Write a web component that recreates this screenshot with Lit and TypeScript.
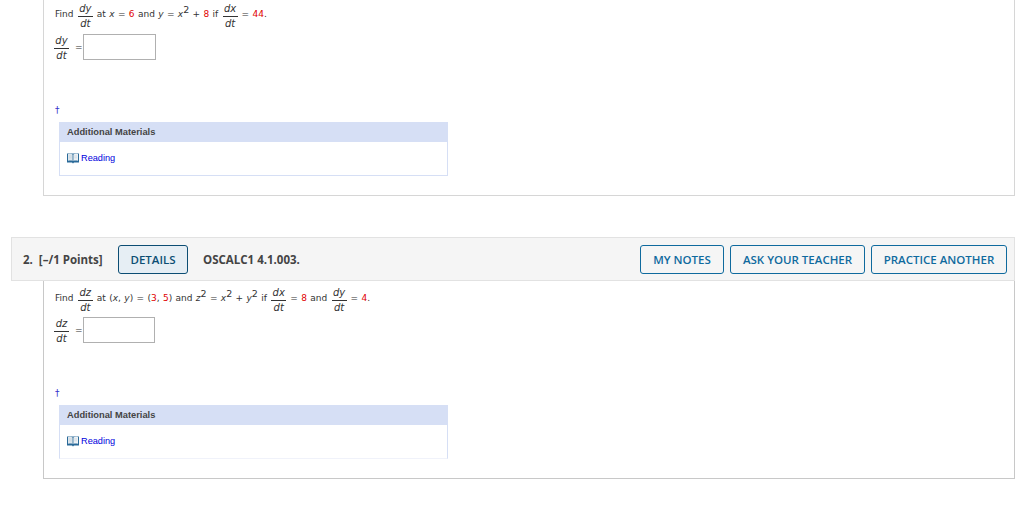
import { LitElement, html, css } from "lit";
import { customElement } from "lit/decorators.js";

const frac = (a: string, b: string) =>
  html`<span class="frac"><i class="num">${a}</i><i class="den">${b}</i></span>`;
const book = html`<svg class="book" width="12" height="11" viewBox="0 0 12 11">
  <path d="M0 .5H12V9.5H7L6 10.5L5 9.5H0Z" fill="#2a6a99"/>
  <path d="M1 1C3 .6 4.8 .7 5.6 1.4V8C4.6 7.5 3 7.4 1 7.8Z" fill="#dde6ec"/>
  <path d="M11 1C9 .6 7.2 .7 6.4 1.4V8C7.4 7.5 9 7.4 11 7.8Z" fill="#eef2f5"/>
  <path d="M2 3H4.8M2 4.8H4.8M7.2 3H10M7.2 4.8H10" stroke="#c2ced8" stroke-width=".6"/>
</svg>`;

@customElement("app-root")
export class AppRoot extends LitElement {
  static styles = css`
    :host { display: block; width: 1024px; height: 507px; overflow: hidden; background: #fff;
      font-family: "DejaVu Sans", sans-serif; font-size: 9px; color: #333; }
    .card { margin-left: 43px; width: 972px; box-sizing: border-box; background: #fff;
      border: 1px solid #d6d6d6; border-top: 0; padding-left: 11px; }
    .c1 { height: 196px; margin-bottom: 41px; padding-top: 1px; }
    .c2 { height: 198px; border-color: #c8c8c8; padding-top: 4px; }
    .q { white-space: pre; height: 26px; line-height: 26px; word-spacing: .5px; }
    .frac { display: inline-flex; flex-direction: column; align-items: center; margin: 0 4px 0 1px;
      font-size: 10px; line-height: 12px; vertical-align: 5px; height: 12px; }
    .num { border-bottom: 1px solid #333; padding: 0 1px 1px; min-width: 13px; text-align: center; }
    .den { padding-top: 1px; }
    .red { color: #e00000; }
    sup { font-size: 9.5px; line-height: 0; vertical-align: 4px; }
    .ans { display: flex; align-items: center; margin: 6px 0 0 -1px; height: 26px; }
    .c1 .ans { margin-top: 7px; }
    .ans .frac { margin: 2px 6px 0 0; height: auto; }
    .box { width: 73px; height: 26px; box-sizing: border-box; border: 1px solid #b0b0b0; background: #fff; }
    .c2 .box { width: 72px; }
    .dag { color: #3333cc; height: 12px; line-height: 12px; margin-top: 44px; font-size: 9px; }
    .add { margin: 6px 0 0 4px; width: 389px; height: 54px; box-sizing: border-box; border: 1px solid #d6dff5; }
    .c2 .add { border-bottom-color: #f0f2fa; }
    .add h4 { margin: 0; height: 19px; background: #d6dff5; padding-left: 7px;
      font: bold 9.3px/19px "Liberation Sans", sans-serif; color: #444; }
    .read { display: flex; align-items: center; gap: 2px; margin: 10px 0 0 7px;
      font: 9.2px/12px "Liberation Sans", sans-serif; color: #0000dd; }
    .head { margin-left: 11px; width: 1004px; height: 44px; box-sizing: border-box; background: #f5f5f5;
      border: 1px solid #e2e2e2; display: flex; align-items: center; padding: 0 7px 0 11px;
      font: 700 11.5px "Open Sans", sans-serif; color: #444; }
    .pts { width: 95px; white-space: pre; }
    .btn { height: 29px; box-sizing: border-box; border: 1px solid #0f6a9e; border-radius: 3px;
      display: flex; align-items: center; justify-content: center; color: #0f6a9e;
      font: 600 11.5px "Open Sans", sans-serif; }
    .det { width: 70px; background: #e6eef4; border-color: #0c4d73; color: #0c4d73; }
    .code { margin-left: 15px; flex: 1; }
    .right { display: flex; gap: 6px; }
    .w1 { width: 84px; } .w2 { width: 135px; } .w3 { width: 136px; }
  `;

  private extra() {
    return html`<div class="dag">†</div>
      <div class="add"><h4>Additional Materials</h4><div class="read">${book}<span>Reading</span></div></div>`;
  }

  render() {
    return html`
      <div class="card c1">
        <div class="q">Find ${frac("dy", "dt")}at <i>x</i> = <span class="red">6</span> and <i>y</i> = <i>x</i><sup>2</sup> + <span class="red">8</span> if ${frac("dx", "dt")}= <span class="red">44</span>.</div>
        <div class="ans">${frac("dy", "dt")}=<div class="box"></div></div>
        ${this.extra()}
      </div>
      <div class="head">
        <div class="pts">2.  [–/1 Points]</div>
        <div class="btn det">DETAILS</div>
        <div class="code">OSCALC1 4.1.003.</div>
        <div class="right">
          <div class="btn w1">MY NOTES</div>
          <div class="btn w2">ASK YOUR TEACHER</div>
          <div class="btn w3">PRACTICE ANOTHER</div>
        </div>
      </div>
      <div class="card c2">
        <div class="q">Find ${frac("dz", "dt")}at (<i>x</i>, <i>y</i>) = (<span class="red">3</span>, <span class="red">5</span>) and <i>z</i><sup>2</sup> = <i>x</i><sup>2</sup> + <i>y</i><sup>2</sup> if ${frac("dx", "dt")}= <span class="red">8</span> and ${frac("dy", "dt")}= <span class="red">4</span>.</div>
        <div class="ans">${frac("dz", "dt")}=<div class="box"></div></div>
        ${this.extra()}
      </div>
    `;
  }
}
